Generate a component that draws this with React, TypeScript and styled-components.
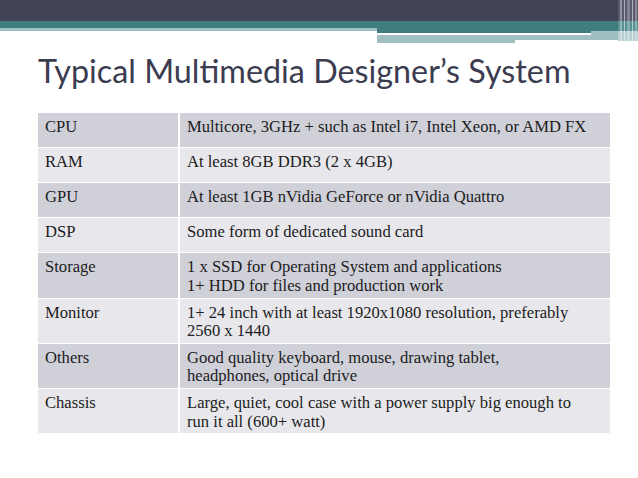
import React from "react";
import styled, { createGlobalStyle } from "styled-components";

const Global = createGlobalStyle`
  html, body { margin: 0; padding: 0; background: #ffffff; }
  #root { width: 638px; height: 478px; overflow: hidden; }
`;

const Slide = styled.div`
  width: 638px;
  height: 478px;
  background: #ffffff;
  display: flex;
  flex-direction: column;
`;

const HeaderArt = styled.svg`
  display: block;
  width: 638px;
  height: 44px;
  flex: none;
`;

const Title = styled.h1`
  margin: 8px 0 0 38px;
  font-family: Lato, "Open Sans", sans-serif;
  font-weight: 400;
  font-size: 32.3px;
  line-height: 38.4px;
  letter-spacing: 0;
  color: #3c3c51;
  white-space: nowrap;
`;

const Table = styled.div`
  margin: 23px 0 0 38px;
  width: 572px;
  display: grid;
  grid-template-columns: 140px 430px;
  column-gap: 2px;
  row-gap: 1px;
  background: #ffffff;
`;

const Cell = styled.div<{ $shade: boolean }>`
  box-sizing: border-box;
  min-height: 34px;
  padding: 5px 4px 2px 7px;
  background: ${(p) => (p.$shade ? "#cfd0d8" : "#e8e8ec")};
  font-family: "Liberation Serif", "Times New Roman", serif;
  font-size: 16.6px;
  line-height: 18.6px;
  color: #1c1c22;
  white-space: nowrap;
`;

const rows: [string, string[]][] = [
  ["CPU", ["Multicore, 3GHz + such as Intel i7, Intel Xeon, or AMD FX"]],
  ["RAM", ["At least 8GB DDR3 (2 x 4GB)"]],
  ["GPU", ["At least 1GB nVidia GeForce or nVidia Quattro"]],
  ["DSP", ["Some form of dedicated sound card"]],
  ["Storage", ["1 x SSD for Operating System and applications", "1+ HDD for files and production work"]],
  ["Monitor", ["1+ 24 inch with at least 1920x1080 resolution, preferably", "2560 x 1440"]],
  ["Others", ["Good quality keyboard, mouse, drawing tablet,", "headphones, optical drive"]],
  ["Chassis", ["Large, quiet, cool case with a power supply big enough to", "run it all (600+ watt)"]],
];

function Header() {
  return (
    <HeaderArt viewBox="0 0 638 44" xmlns="http://www.w3.org/2000/svg">
      <rect x="0" y="0" width="638" height="21" fill="#424257" />
      <rect x="0" y="21" width="638" height="7" fill="#3f7d80" />
      <rect x="0" y="28" width="377" height="3" fill="#a0bfc2" />
      <rect x="377" y="28" width="241" height="5" fill="#3f7d80" />
      <rect x="591" y="31" width="27" height="9" fill="#a0bfc2" />
      <rect x="377" y="33" width="214" height="2" fill="#ffffff" />
      <rect x="377" y="35" width="214" height="5" fill="#a0bfc2" />
      <rect x="377" y="40" width="138" height="3" fill="#a0bfc2" />
      <rect x="618" y="0" width="20" height="21" fill="#5a5a6e" />
      <rect x="618" y="21" width="20" height="10" fill="#5a9294" />
      <rect x="618" y="31" width="20" height="10" fill="#b8d0d2" />
      <rect x="620" y="0" width="2" height="41" fill="#ffffff" opacity="0.35" />
      <rect x="624" y="0" width="1" height="41" fill="#ffffff" opacity="0.5" />
      <rect x="627" y="0" width="3" height="41" fill="#ffffff" opacity="0.25" />
      <rect x="632" y="0" width="1" height="41" fill="#ffffff" opacity="0.55" />
      <rect x="635" y="0" width="2" height="41" fill="#ffffff" opacity="0.3" />
    </HeaderArt>
  );
}

export default function App() {
  return (
    <>
      <Global />
      <Slide>
        <Header />
        <Title>Typical Multimedia Designer’s System</Title>
        <Table>
          {rows.map(([label, lines], i) => (
            <React.Fragment key={label}>
              <Cell $shade={i % 2 === 0}>{label}</Cell>
              <Cell $shade={i % 2 === 0}>
                {lines.map((l, j) => (
                  <React.Fragment key={j}>
                    {j > 0 && <br />}
                    {l}
                  </React.Fragment>
                ))}
              </Cell>
            </React.Fragment>
          ))}
        </Table>
      </Slide>
    </>
  );
}
